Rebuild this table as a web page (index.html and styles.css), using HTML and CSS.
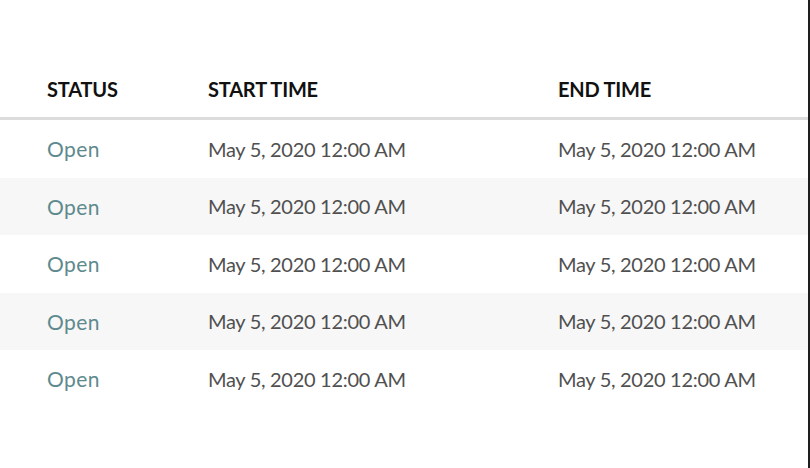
FILE: index.html
```html
<!DOCTYPE html>
<html>
<head>
<meta charset="utf-8">
<link rel="stylesheet" href="styles.css">
</head>
<body>
<div class="panel">
  <table class="grid">
    <thead>
      <tr>
        <th class="c-status">STATUS</th>
        <th class="c-start">START TIME</th>
        <th class="c-end">END TIME</th>
      </tr>
    </thead>
    <tbody>
      <tr><td class="status">Open</td><td>May 5, 2020 12:00 AM</td><td>May 5, 2020 12:00 AM</td></tr>
      <tr class="alt"><td class="status">Open</td><td>May 5, 2020 12:00 AM</td><td>May 5, 2020 12:00 AM</td></tr>
      <tr><td class="status">Open</td><td>May 5, 2020 12:00 AM</td><td>May 5, 2020 12:00 AM</td></tr>
      <tr class="alt"><td class="status">Open</td><td>May 5, 2020 12:00 AM</td><td>May 5, 2020 12:00 AM</td></tr>
      <tr><td class="status">Open</td><td>May 5, 2020 12:00 AM</td><td>May 5, 2020 12:00 AM</td></tr>
    </tbody>
  </table>
</div>
</body>
</html>
```
FILE: styles.css
```css
html, body {
  margin: 0;
  padding: 0;
  background: #ffffff;
}
.panel {
  width: 810px;
  height: 468px;
  border-right: 2px solid #1e1e1e;
  padding-top: 60px;
  box-sizing: border-box;
  overflow: hidden;
  font-family: Lato, "Noto Sans", sans-serif;
}
.grid {
  width: 100%;
  border-collapse: collapse;
  table-layout: fixed;
}
.grid th {
  height: 57px;
  padding: 0;
  text-align: left;
  font-size: 20px;
  font-weight: 700;
  color: #111;
  letter-spacing: -0.2px;
  vertical-align: middle;
  border-bottom: 3px solid #dcdcdc;
}
.c-status { width: 161px; padding-left: 47px !important; }
.c-start { width: 350px; }
.grid td {
  height: 57.5px;
  padding: 0;
  font-size: 20px;
  color: #505050;
  letter-spacing: -0.3px;
  vertical-align: middle;
}
.grid td.status {
  padding-left: 47px;
  color: #5e8a8e;
  font-size: 21px;
  letter-spacing: 0.4px;
}
.grid tr.alt td {
  background: #f7f7f7;
}
```
